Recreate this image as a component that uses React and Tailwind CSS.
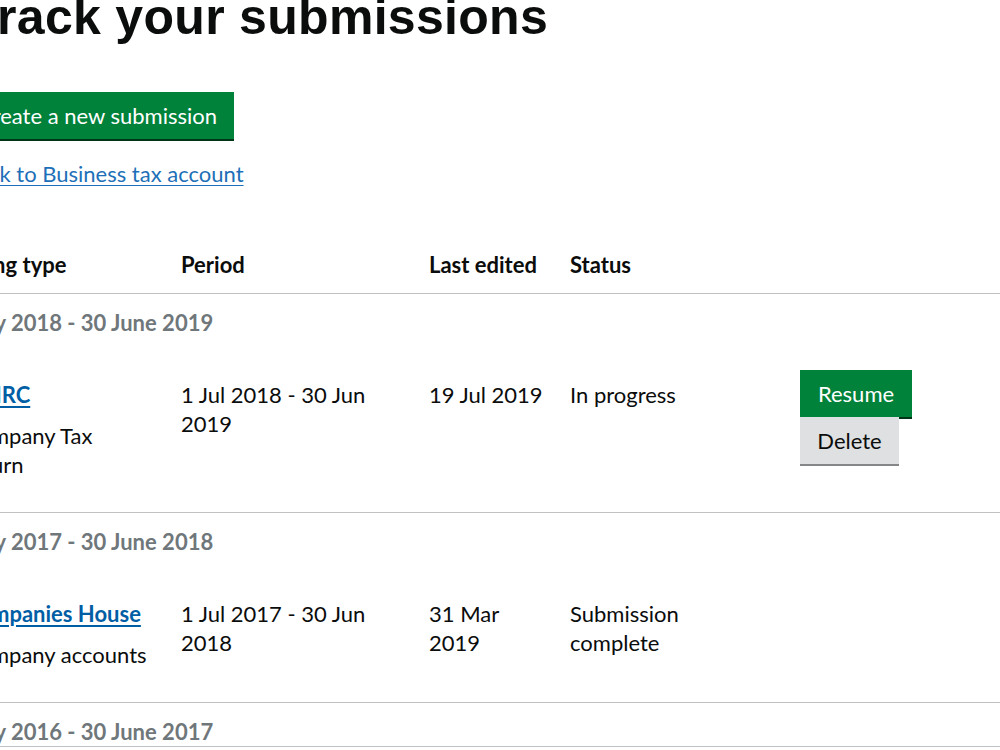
import React from "react";

const font = { fontFamily: "Lato, 'Liberation Sans', Arial, sans-serif" };
const headingFont = { fontFamily: "'Liberation Sans', Arial, sans-serif" };

const groups = [
  {
    label: "1 July 2018 - 30 June 2019",
    rows: [
      {
        agency: "HMRC",
        kind: "Company Tax return",
        period: "1 Jul 2018 - 30 Jun 2019",
        edited: "19 Jul 2019",
        status: "In progress",
        actions: true,
      },
    ],
  },
  {
    label: "1 July 2017 - 30 June 2018",
    rows: [
      {
        agency: "Companies House",
        kind: "Company accounts",
        period: "1 Jul 2017 - 30 Jun 2018",
        edited: "31 Mar 2019",
        status: "Submission complete",
        actions: false,
      },
    ],
  },
  {
    label: "1 July 2016 - 30 June 2017",
    rows: [],
  },
];

const cols = "grid grid-cols-[217px_248px_141px_230px_1fr]";

export default function App() {
  return (
    <div
      className="w-[1000px] h-[750px] overflow-hidden bg-white text-[#0b0c0c]"
      style={font}
    >
      <div className="-ml-[36px] w-[1100px]">
        {/* Heading */}
        <h1
          className="ml-[5px] text-[50px] font-bold leading-[56px] -mt-[11px] tracking-[0.3px]"
          style={headingFont}
        >
          Track your submissions
        </h1>

        {/* Create button */}
        <div className="mt-[47px]">
          <button className="h-[47px] pl-[14px] pr-[17px] bg-[#00823b] text-white text-[22px] leading-[29px] shadow-[0_2px_0_#003618]">
            Create a new submission
          </button>
        </div>

        {/* Back link */}
        <div className="mt-[20px]">
          <a
            href="#"
            className="text-[22px] leading-[29px] text-[#1d70b8] underline underline-offset-[3px] decoration-1"
          >
            Back to Business tax account
          </a>
        </div>

        {/* Table */}
        <div className="mt-[62px] text-[22px] leading-[29px]">
          <div className={`${cols} font-bold pb-[14px] border-b border-[#bfc1c3]`}>
            <div>Filing type</div>
            <div>Period</div>
            <div>Last edited</div>
            <div>Status</div>
            <div></div>
          </div>

          {groups.map((g) => (
            <div key={g.label} className="border-b border-[#bfc1c3]">
              <div className="pt-[14px] font-bold text-[#6f777b]">
                <span className="-ml-[14px]">{g.label}</span>
              </div>
              {g.rows.map((r) => (
                <div key={r.agency} className={`${cols} pt-[43px] pb-[33px]`}>
                  <div className="pr-[30px]">
                    <a
                      href="#"
                      className="font-bold text-[#005ea5] underline underline-offset-[3px]"
                    >
                      {r.agency}
                    </a>
                    <p className="mt-[12px]">{r.kind}</p>
                  </div>
                  <div className="pr-[23px]">{r.period}</div>
                  <div className="pr-[23px]">{r.edited}</div>
                  <div className="pr-[23px] max-w-[170px]">{r.status}</div>
                  <div>
                    {r.actions && (
                      <div className="-mt-[10px] flex flex-col items-start">
                        <button className="h-[47px] w-[112px] bg-[#00823b] text-white shadow-[0_2px_0_#003618]">
                          Resume
                        </button>
                        <button className="relative h-[47px] w-[99px] bg-[#dee0e2] shadow-[0_2px_0_#858688]">
                          Delete
                        </button>
                      </div>
                    )}
                  </div>
                </div>
              ))}
            </div>
          ))}
        </div>
      </div>
    </div>
  );
}
